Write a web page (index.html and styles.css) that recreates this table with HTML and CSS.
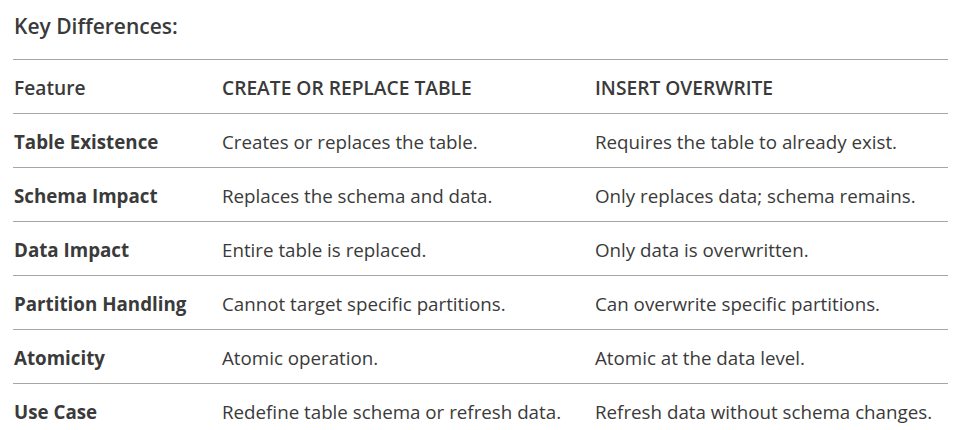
FILE: index.html
```html
<!DOCTYPE html>
<html>
<head>
<meta charset="utf-8">
<link rel="stylesheet" href="styles.css">
</head>
<body>
<div class="page">
  <h3 class="title">Key Differences:</h3>
  <div class="table">
    <div class="row head">
      <div class="cell">Feature</div>
      <div class="cell">CREATE OR REPLACE TABLE</div>
      <div class="cell">INSERT OVERWRITE</div>
    </div>
    <div class="row">
      <div class="cell key">Table Existence</div>
      <div class="cell">Creates or replaces the table.</div>
      <div class="cell">Requires the table to already exist.</div>
    </div>
    <div class="row">
      <div class="cell key">Schema Impact</div>
      <div class="cell">Replaces the schema and data.</div>
      <div class="cell">Only replaces data; schema remains.</div>
    </div>
    <div class="row">
      <div class="cell key">Data Impact</div>
      <div class="cell">Entire table is replaced.</div>
      <div class="cell">Only data is overwritten.</div>
    </div>
    <div class="row">
      <div class="cell key">Partition Handling</div>
      <div class="cell">Cannot target specific partitions.</div>
      <div class="cell">Can overwrite specific partitions.</div>
    </div>
    <div class="row">
      <div class="cell key">Atomicity</div>
      <div class="cell">Atomic operation.</div>
      <div class="cell">Atomic at the data level.</div>
    </div>
    <div class="row last">
      <div class="cell key">Use Case</div>
      <div class="cell">Redefine table schema or refresh data.</div>
      <div class="cell">Refresh data without schema changes.</div>
    </div>
  </div>
</div>
</body>
</html>
```

FILE: styles.css
```css
html, body {
  margin: 0;
  padding: 0;
  background: #ffffff;
}
body {
  font-family: "Open Sans", "Noto Sans", sans-serif;
  color: #3a3a3a;
}
.page {
  padding: 0 0 0 13px;
  width: 935px;
}
.title {
  margin: 0;
  padding-top: 11px;
  height: 59px;
  box-sizing: border-box;
  font-size: 21px;
  font-weight: 600;
  line-height: 30px;
  padding-left: 1px;
}
.table {
  border-top: 1px solid #a6a6a6;
}
.row {
  display: grid;
  grid-template-columns: 208px 373px 1fr;
  height: 53px;
  align-items: center;
  border-bottom: 1px solid #a6a6a6;
  font-size: 18.75px;
}
.row.head {
  font-size: 19.2px;
}
.row.last {
  border-bottom: none;
}
.cell {
  padding-left: 1px;
  padding-top: 2px;
  white-space: nowrap;
}
.head .cell {
  font-weight: 600;
}
.cell.key {
  font-weight: 700;
}
```
